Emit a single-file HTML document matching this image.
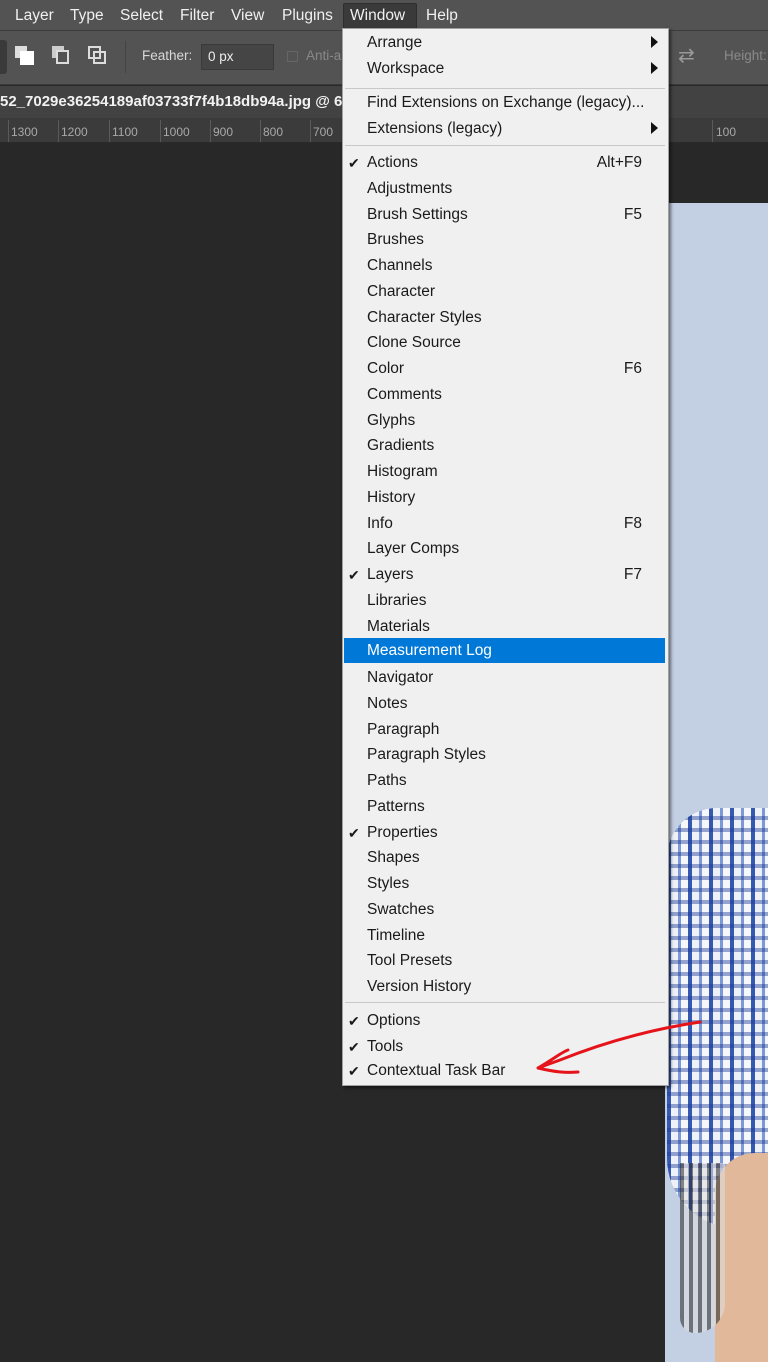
<!DOCTYPE html>
<html><head><meta charset="utf-8"><style>
*{margin:0;padding:0;box-sizing:border-box}
body{width:768px;height:1362px;background:#282828;position:relative;overflow:hidden;font-family:"Liberation Sans",sans-serif}
.abs{position:absolute}
#menubar{left:0;top:0;width:768px;height:31px;background:#535353;border-bottom:1px solid #3c3c3c}
#menubar span{position:absolute;top:7px;color:#f0f0f0;font-size:15.5px}
#opts{left:0;top:31px;width:768px;height:54px;background:#535353;border-bottom:1px solid #3a3a3a}
#tab{left:0;top:86px;width:768px;height:32px;background:#424242}
#ruler{left:0;top:118px;width:768px;height:25px;background:#3b3b3b;border-bottom:1px solid #2a2a2a}
#ruler span{position:absolute;top:7px;color:#a8a8a8;font-size:12px}
#ruler i{position:absolute;top:2px;width:1px;height:22px;background:#5a5a5a}
#photo{left:665px;top:203px;width:103px;height:1159px;background:#c3cfe3}
#menu{left:342px;top:28px;width:327px;height:1058px;background:#f0f0f0;border:1px solid #a0a0a0;box-shadow:2px 2px 3px rgba(0,0,0,.5)}
.it{position:absolute;left:0;width:323px;height:26px;line-height:28px;font-size:15.5px;color:#1a1a1a}
.it b{font-weight:normal;position:absolute;left:24px}
.it s{text-decoration:none;position:absolute;right:24px}
.it u{text-decoration:none;position:absolute;left:5px;font-size:14px}
.it em{position:absolute;right:8px;top:7px;width:0;height:0;border-top:6px solid transparent;border-bottom:6px solid transparent;border-left:7px solid #111}
.sep{position:absolute;left:2px;width:320px;height:1px;background:#c8c8c8}
.hl{background:#0078d7;color:#fff;line-height:25px}
</style></head><body>
<div id="menubar" class="abs">
<span style="left:15px">Layer</span><span style="left:70px">Type</span><span style="left:120px">Select</span><span style="left:180px">Filter</span><span style="left:231px">View</span><span style="left:282px">Plugins</span>
<div class="abs" style="left:343px;top:3px;width:74px;height:26px;background:#3a3a3a;border:1px solid #2e2e2e;border-radius:2px"></div>
<span style="left:350px">Window</span><span style="left:426px">Help</span>
</div>
<div id="opts" class="abs">
<div class="abs" style="left:0;top:9px;width:7px;height:34px;background:#3a3a3a;border-radius:0 3px 3px 0"></div>
<div class="abs" style="left:15px;top:15px;width:12px;height:12px;background:#ddd"></div><div class="abs" style="left:20px;top:20px;width:14px;height:14px;background:#fff"></div>
<div class="abs" style="left:52px;top:15px;width:12px;height:12px;background:#ccc"></div><div class="abs" style="left:56px;top:19px;width:13px;height:14px;border:2px solid #ddd;background:#535353"></div>
<div class="abs" style="left:88px;top:15px;width:13px;height:13px;border:2px solid #ddd"></div><div class="abs" style="left:93px;top:20px;width:13px;height:13px;border:2px solid #ddd"></div>
<div class="abs" style="left:125px;top:10px;width:1px;height:32px;background:#444"></div>
<span class="abs" style="left:142px;top:17px;color:#d8d8d8;font-size:13.5px">Feather:</span>
<div class="abs" style="left:201px;top:13px;width:73px;height:26px;background:#454545;border:1px solid #3a3a3a;color:#eee;font-size:13.5px;padding:4px 6px">0 px</div>
<div class="abs" style="left:287px;top:20px;width:11px;height:11px;border:1px solid #666"></div>
<span class="abs" style="left:306px;top:17px;color:#888;font-size:13.5px">Anti-a</span>
<span class="abs" style="left:678px;top:12px;color:#9a9a9a;font-size:20px">⇄</span>
<span class="abs" style="left:724px;top:17px;color:#8a8a8a;font-size:13.5px">Height:</span>
</div>
<div id="tab" class="abs"><span class="abs" style="left:0;top:7px;color:#f2f2f2;font-size:15px;font-weight:bold;white-space:nowrap">52_7029e36254189af03733f7f4b18db94a.jpg @ 6</span></div>
<div id="ruler" class="abs">
<i style="left:8px"></i><span style="left:11px">1300</span><i style="left:58px"></i><span style="left:61px">1200</span><i style="left:109px"></i><span style="left:112px">1100</span><i style="left:160px"></i><span style="left:163px">1000</span><i style="left:210px"></i><span style="left:213px">900</span><i style="left:260px"></i><span style="left:263px">800</span><i style="left:310px"></i><span style="left:313px">700</span><i style="left:712px"></i><span style="left:716px">100</span>
</div>
<div id="photo" class="abs">
<div class="abs" style="left:2px;top:605px;width:101px;height:420px;border-radius:50px 0 0 70px;background:repeating-linear-gradient(90deg,#3558b0 0 4px,#eef1f8 4px 11px,#7d98d6 11px 14px,#f6f7fb 14px 21px)"></div>
<div class="abs" style="left:2px;top:605px;width:101px;height:420px;border-radius:50px 0 0 70px;background:repeating-linear-gradient(0deg,rgba(30,60,150,.45) 0 4px,transparent 4px 12px)"></div>
<div class="abs" style="left:50px;top:950px;width:53px;height:209px;background:#e1b899;border-radius:40px 0 0 0"></div>
<div class="abs" style="left:15px;top:960px;width:45px;height:170px;background:repeating-linear-gradient(90deg,#333 0 4px,#ddd 4px 9px);border-radius:0 0 40px 20px;opacity:.6"></div>
</div>
<div id="menu" class="abs">
<div class="it" style="top:0"><b>Arrange</b><em></em></div>
<div class="it" style="top:26px"><b>Workspace</b><em></em></div>
<div class="sep" style="top:59px"></div>
<div class="it" style="top:60px"><b>Find Extensions on Exchange (legacy)...</b></div>
<div class="it" style="top:86px"><b>Extensions (legacy)</b><em></em></div>
<div class="sep" style="top:116px"></div>
<div class="it" style="top:120px"><u>✔</u><b>Actions</b><s>Alt+F9</s></div>
<div class="it" style="top:145.8px"><b>Adjustments</b></div>
<div class="it" style="top:171.5px"><b>Brush Settings</b><s>F5</s></div>
<div class="it" style="top:197.2px"><b>Brushes</b></div>
<div class="it" style="top:223px"><b>Channels</b></div>
<div class="it" style="top:248.8px"><b>Character</b></div>
<div class="it" style="top:274.5px"><b>Character Styles</b></div>
<div class="it" style="top:300.2px"><b>Clone Source</b></div>
<div class="it" style="top:326px"><b>Color</b><s>F6</s></div>
<div class="it" style="top:351.8px"><b>Comments</b></div>
<div class="it" style="top:377.5px"><b>Glyphs</b></div>
<div class="it" style="top:403.2px"><b>Gradients</b></div>
<div class="it" style="top:429px"><b>Histogram</b></div>
<div class="it" style="top:454.8px"><b>History</b></div>
<div class="it" style="top:480.5px"><b>Info</b><s>F8</s></div>
<div class="it" style="top:506.2px"><b>Layer Comps</b></div>
<div class="it" style="top:532px"><u>✔</u><b>Layers</b><s>F7</s></div>
<div class="it" style="top:557.8px"><b>Libraries</b></div>
<div class="it" style="top:583.5px"><b>Materials</b></div>
<div class="it hl" style="top:609.2px;left:1px;width:321px;height:25px"><b style="left:23px">Measurement Log</b></div>
<div class="it" style="top:635px"><b>Navigator</b></div>
<div class="it" style="top:660.8px"><b>Notes</b></div>
<div class="it" style="top:686.5px"><b>Paragraph</b></div>
<div class="it" style="top:712.2px"><b>Paragraph Styles</b></div>
<div class="it" style="top:738px"><b>Paths</b></div>
<div class="it" style="top:763.8px"><b>Patterns</b></div>
<div class="it" style="top:789.5px"><u>✔</u><b>Properties</b></div>
<div class="it" style="top:815.2px"><b>Shapes</b></div>
<div class="it" style="top:841px"><b>Styles</b></div>
<div class="it" style="top:866.8px"><b>Swatches</b></div>
<div class="it" style="top:892.5px"><b>Timeline</b></div>
<div class="it" style="top:918.2px"><b>Tool Presets</b></div>
<div class="it" style="top:944px"><b>Version History</b></div>
<div class="sep" style="top:973px"></div>
<div class="it" style="top:978px"><u>✔</u><b>Options</b></div>
<div class="it" style="top:1004px"><u>✔</u><b>Tools</b></div>
<div class="it" style="top:1028px"><u>✔</u><b>Contextual Task Bar</b></div>
</div>
<svg class="abs" style="left:520px;top:1010px" width="190" height="70"><path d="M180 12 C140 18 90 30 40 50 L18 58 M18 58 C35 48 42 42 48 40 M18 58 C35 62 45 63 58 62" fill="none" stroke="#e5141b" stroke-width="3" stroke-linecap="round"/></svg>
</body></html>
